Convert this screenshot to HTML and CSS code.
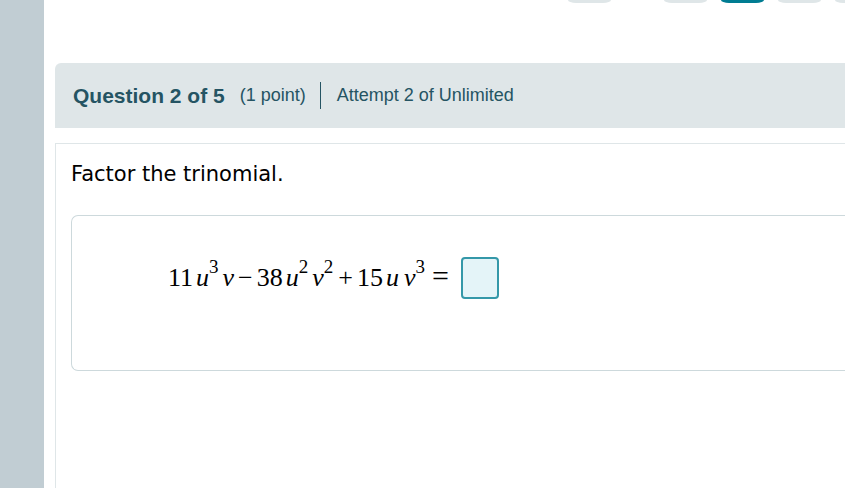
FILE: index.html
```html
<!DOCTYPE html>
<html lang="en">
<head>
<meta charset="utf-8">
<title>Question 2 of 5</title>
<link rel="stylesheet" href="styles.css">
</head>
<body>
<div class="rail"></div>
<div class="page">
  <nav class="pager" aria-label="Questions">
    <button class="tab previous" type="button" aria-label="Previous"></button>
    <button class="tab" type="button" aria-label="Question 1"></button>
    <button class="tab current" type="button" aria-label="Question 2"></button>
    <button class="tab" type="button" aria-label="Question 3"></button>
    <button class="tab" type="button" aria-label="Question 4"></button>
  </nav>
  <header class="question-bar">
    <h1 class="title">Question 2 of 5</h1>
    <span class="points">(1 point)</span>
    <span class="attempt">Attempt 2 of Unlimited</span>
  </header>
  <main class="question">
    <p class="prompt">Factor the trinomial.</p>
    <div class="answer-area">
      <label class="expression" for="answer"><span>11</span><i>u</i><sup>3</sup><i>v</i><span class="op">−</span><span>38</span><i>u</i><sup>2</sup><i>v</i><sup>2</sup><span class="op">+</span><span>15</span><i>u</i><i>v</i><sup>3</sup><span class="equals">=</span></label>
      <input class="blank" id="answer" type="text" autocomplete="off">
    </div>
  </main>
</div>
</body>
</html>
```
FILE: styles.css
```css
* { box-sizing: border-box; }

body {
  margin: 0;
  min-height: 100vh;
  display: flex;
  overflow: hidden;
  background: #fff;
  color: #000;
  font-family: "Liberation Sans", Arial, sans-serif;
}

.rail {
  flex: 0 0 44px;
  background: #c1cdd3;
}

.page {
  flex: 1;
  min-width: 0;
  display: flex;
  flex-direction: column;
  padding-left: 11px;
}

.pager {
  display: flex;
  justify-content: flex-end;
  gap: 14px;
  margin: 0 -33px 60px 0;
}

.tab {
  width: 43px;
  height: 3px;
  padding: 0;
  border: 0;
  border-radius: 0 0 8px 8px / 0 0 3px 3px;
  background: #dfe6e8;
}

.tab.previous { margin-right: 39px; }
.tab.current { background: #007c92; }

.question-bar {
  display: flex;
  align-items: center;
  height: 65px;
  padding-left: 18px;
  border-top-left-radius: 6px;
  background: #dfe6e8;
  color: #255463;
  font-size: 18px;
  line-height: 27px;
  white-space: nowrap;
}

.title {
  margin: 0 15px 0 0;
  font-size: 21px;
  line-height: 24px;
}

.attempt {
  margin-left: 14px;
  padding-left: 16px;
  border-left: 1px solid #255463;
}

.question {
  flex: 1;
  margin-top: 15px;
  padding: 15px 0 0 15px;
  border: 1px solid #dfe6e8;
  border-width: 1px 0 0 1px;
}

.prompt {
  margin: 0;
  font: 21px/30px "DejaVu Sans", Verdana, sans-serif;
}

.answer-area {
  display: flex;
  align-items: flex-start;
  height: 156px;
  margin-top: 26px;
  padding: 41px 0 0 96px;
  border: 1px solid #cdd9dc;
  border-right: 0;
  border-radius: 7px 0 0 7px;
}

.expression {
  display: flex;
  align-items: baseline;
  font: 26px/42px "Liberation Serif", "Times New Roman", serif;
}

.expression i { padding-left: 3px; }
.expression i + i { padding-left: 5px; }

.expression sup {
  align-self: flex-start;
  margin-right: 1px;
  font-size: 19px;
  line-height: 20px;
}

.op { margin: 0 4px; }

.equals {
  margin: 0 12px 0 6px;
  font-size: 30px;
  line-height: 34px;
}

.blank {
  width: 38px;
  height: 42px;
  padding: 0 4px;
  border: 2px solid #3498a9;
  border-radius: 4px;
  background: #e4f4f8;
  font: 26px "Liberation Serif", "Times New Roman", serif;
}
```
